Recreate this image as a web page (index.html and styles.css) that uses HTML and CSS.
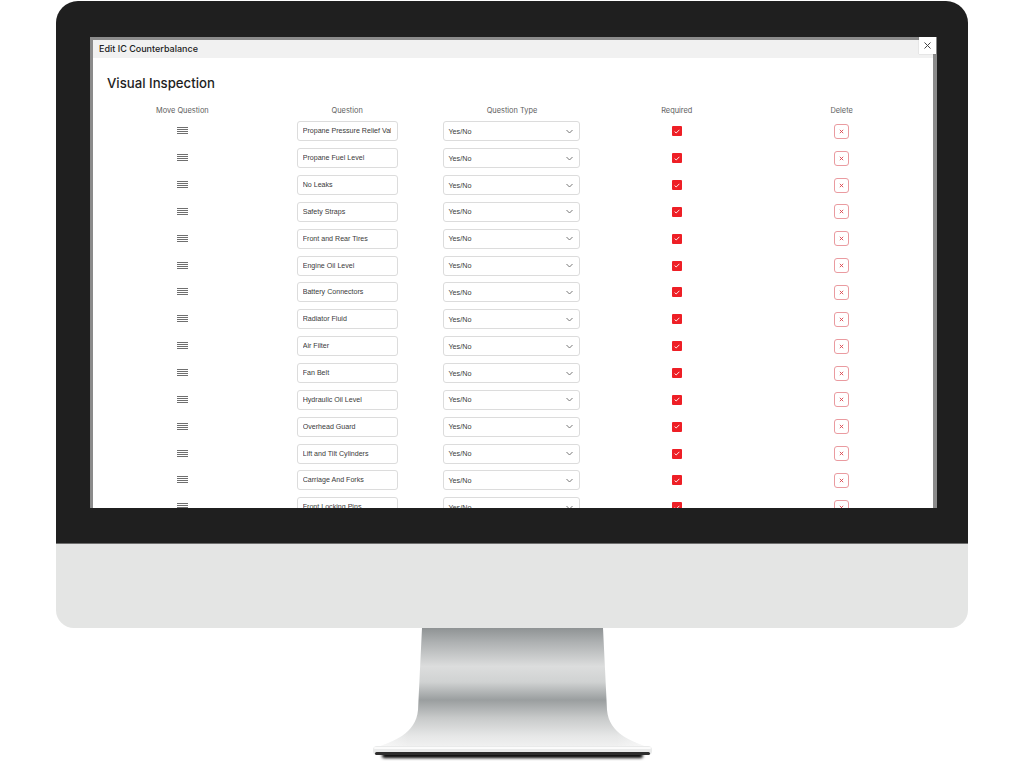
FILE: index.html
```html
<!DOCTYPE html>
<html>
<head>
<meta charset="utf-8">
<link rel="stylesheet" href="styles.css">
</head>
<body>
<div class="stage">
  <div class="monitor">
    <div class="bezel">
      <div class="screen">
        <div class="modal">
          <div class="modal-head">Edit IC Counterbalance</div>
          <div class="modal-body">
            <h2 class="title">Visual Inspection</h2>
            <div class="table">
              <div class="row thead">
                <div class="th">Move Question</div>
                <div class="th">Question</div>
                <div class="th">Question Type</div>
                <div class="th">Required</div>
                <div class="th">Delete</div>
              </div>
              <div id="rows"></div>
            </div>
          </div>
        </div>
        <div class="close"><svg width="7" height="7" viewBox="0 0 7 7"><path d="M0.5 0.5L6.5 6.5M6.5 0.5L0.5 6.5" stroke="#444" stroke-width="1"/></svg></div>
      </div>
    </div>
    <div class="chin"></div>
  </div>
  <svg class="stand" width="305" height="140" viewBox="0 0 305 140">
    <defs>
      <linearGradient id="neck" x1="0" y1="0" x2="0" y2="1">
        <stop offset="0" stop-color="#8f9394"/>
        <stop offset="0.12" stop-color="#aeb1b2"/>
        <stop offset="0.32" stop-color="#dcdddd"/>
        <stop offset="0.45" stop-color="#d0d2d2"/>
        <stop offset="0.6" stop-color="#9a9e9f"/>
        <stop offset="0.75" stop-color="#c8caca"/>
        <stop offset="0.9" stop-color="#e6e7e7"/>
        <stop offset="1" stop-color="#f2f2f2"/>
      </linearGradient>
      <linearGradient id="side" x1="0" y1="0" x2="1" y2="0">
        <stop offset="0" stop-color="#ffffff" stop-opacity="0.55"/>
        <stop offset="0.12" stop-color="#ffffff" stop-opacity="0"/>
        <stop offset="0.88" stop-color="#ffffff" stop-opacity="0"/>
        <stop offset="1" stop-color="#ffffff" stop-opacity="0.55"/>
      </linearGradient>
      <filter id="blur" x="-10%" y="-200%" width="120%" height="500%">
        <feGaussianBlur stdDeviation="1.6"/>
      </filter>
    </defs>
    <rect x="22" y="125" width="261" height="5" rx="2.5" fill="#000" filter="url(#blur)"/>
    <path d="M62 0 L243 0 L247 82 C249 106 272 113 289 120 L16 120 C33 113 56 106 58 82 Z" fill="url(#neck)"/>
    <path d="M62 0 L243 0 L247 82 C249 106 272 113 289 120 L16 120 C33 113 56 106 58 82 Z" fill="url(#side)"/>
    <rect x="13" y="118" width="279" height="9" rx="4" fill="#e9eaea"/>
    <rect x="15" y="124" width="275" height="3" rx="1.5" fill="#2e2e2e"/>
    <rect x="14" y="119" width="277" height="2" rx="1" fill="#fbfbfb"/>
  </svg>
</div>
<script>
  var items = ["Propane Pressure Relief Valve","Propane Fuel Level","No Leaks","Safety Straps","Front and Rear Tires","Engine Oil Level","Battery Connectors","Radiator Fluid","Air Filter","Fan Belt","Hydraulic Oil Level","Overhead Guard","Lift and Tilt Cylinders","Carriage And Forks","Front Locking Pins"];
  var html = "";
  items.forEach(function (t) {
    html += '<div class="row">' +
      '<div class="td"><svg class="move" width="11" height="8" viewBox="0 0 11 8"><path d="M0 0.5H11M0 2.5H11M0 4.5H11M0 6.5H11" stroke="#6f6f6f" stroke-width="1"/></svg></div>' +
      '<div class="td"><input class="q-input" type="text" readonly value="' + t + '"></div>' +
      '<div class="td"><div class="select"><span>Yes/No</span><svg width="7" height="5" viewBox="0 0 7 5"><path d="M0.5 1L3.5 4L6.5 1" fill="none" stroke="#777" stroke-width="1"/></svg></div></div>' +
      '<div class="td"><div class="check"><svg width="6" height="5" viewBox="0 0 6 5"><path d="M0.6 2.6L2.2 4L5.4 0.8" fill="none" stroke="#fff" stroke-width="0.9"/></svg></div></div>' +
      '<div class="td"><div class="del"><svg width="5" height="5" viewBox="0 0 5 5"><path d="M0.8 0.8L4.2 4.2M4.2 0.8L0.8 4.2" stroke="#d9444c" stroke-width="0.9"/></svg></div></div>' +
      '</div>';
  });
  document.getElementById("rows").innerHTML = html;
</script>
</body>
</html>
```
FILE: styles.css
```css
html, body {
  margin: 0;
  padding: 0;
  background: #ffffff;
}
.stage {
  width: 1024px;
  height: 768px;
  overflow: hidden;
  padding-top: 1px;
  box-sizing: border-box;
}
.monitor {
  width: 912px;
  margin-left: 56px;
}
.bezel {
  height: 543px;
  box-sizing: border-box;
  background: #1f1f1f;
  border-radius: 22px 22px 0 0;
  padding: 36px 31px 36px 34px;
  border-bottom: 1px solid #6e6e6e;
}
.screen {
  position: relative;
  height: 471px;
  background: #8b8b8b;
  overflow: hidden;
  padding: 3px 4px 0 3px;
  box-sizing: border-box;
}
.modal {
  background: #ffffff;
  height: 100%;
}
.modal-head {
  height: 18px;
  line-height: 18px;
  background: #f1f1f1;
  padding-left: 6px;
  font-family: "Inter", "DejaVu Sans", sans-serif;
  font-size: 9px;
  font-weight: 500;
  color: #222;
}
.modal-body {
  padding: 17px 9px 0 7px;
}
.title {
  margin: 0 0 11px 7px;
  font-family: "Inter", "DejaVu Sans", sans-serif;
  font-weight: 500;
  font-size: 13.2px;
  line-height: 16px;
  color: #1e1e1e;
}
.table {
  width: 824px;
}
.row {
  display: grid;
  grid-template-columns: repeat(5, 1fr);
  align-items: center;
  justify-items: center;
  height: 26.85px;
}
.row.thead {
  height: 16px;
}
.th {
  font-family: "Inter", "DejaVu Sans", sans-serif;
  font-size: 7.4px;
  color: #606060;
}
.td {
  display: flex;
  align-items: center;
  justify-content: center;
}
.move {
  display: block;
}
.q-input {
  width: 101px;
  height: 20px;
  box-sizing: border-box;
  border: 1px solid #dcdcdc;
  border-radius: 3px;
  padding: 0 6px 0 5px;
  margin: 0;
  font-family: "Liberation Sans", Arial, sans-serif;
  font-size: 7.1px;
  color: #3a3a3a;
  background: #fff;
  outline: none;
}
.select {
  width: 137px;
  height: 20px;
  box-sizing: border-box;
  border: 1px solid #dcdcdc;
  border-radius: 3px;
  display: flex;
  align-items: center;
  justify-content: space-between;
  padding: 0 6px 0 4px;
  font-family: "Liberation Sans", Arial, sans-serif;
  font-size: 7.2px;
  color: #3a3a3a;
}
.select svg {
  display: block;
}
.check {
  width: 10px;
  height: 10px;
  background: #ee1f26;
  border-radius: 1px;
  display: flex;
  align-items: center;
  justify-content: center;
}
.check svg, .del svg {
  display: block;
}
.del {
  width: 15px;
  height: 15px;
  box-sizing: border-box;
  border: 1px solid #ea9ba0;
  border-radius: 3px;
  display: flex;
  align-items: center;
  justify-content: center;
  background: #fff;
}
.close {
  position: absolute;
  top: 0;
  right: 1px;
  width: 17px;
  height: 17px;
  background: #ffffff;
  display: flex;
  align-items: center;
  justify-content: center;
  box-shadow: 0 0 1px rgba(0,0,0,0.25);
}
.chin {
  height: 84px;
  background: #e4e5e4;
  border-radius: 0 0 18px 18px;
}
.stand {
  display: block;
  margin-left: 360px;
}
```
